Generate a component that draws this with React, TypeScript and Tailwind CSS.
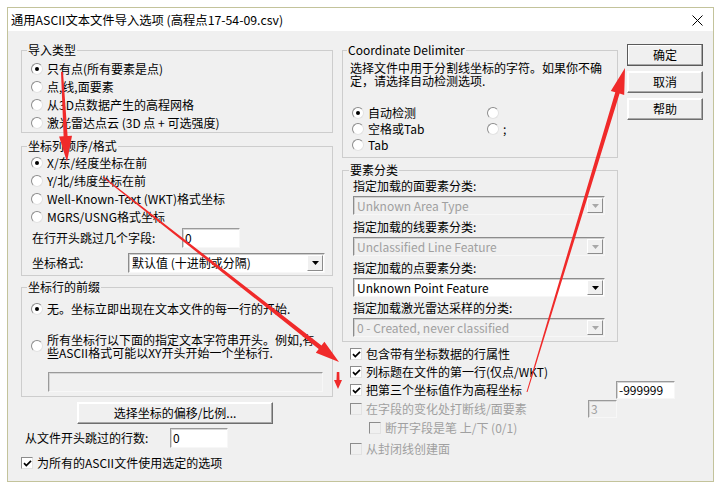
import React from 'react';

// classic win32 controls
const Radio = ({ on }: { on?: boolean }) => (
    <span className="inline-flex w-[12px] h-[12px] shrink-0 rounded-full bg-white border border-t-[#8c8c8c] border-l-[#8c8c8c] border-r-[#e2e2e2] border-b-[#e2e2e2] items-center justify-center">
        {on && <span className="w-[4px] h-[4px] rounded-full bg-black" />}
    </span>
);

const Check = ({ on, disabled }: { on?: boolean; disabled?: boolean }) => (
    <span className={`inline-flex w-[12px] h-[12px] shrink-0 items-center justify-center border border-t-[#8c8c8c] border-l-[#8c8c8c] border-r-[#e2e2e2] border-b-[#e2e2e2] ${disabled ? 'bg-[#f0f0f0]' : 'bg-white'}`}>
        {on && (
            <svg width="9" height="9" viewBox="0 0 9 9">
                <polyline points="1,4.2 3.3,6.6 8,1.8" fill="none" stroke="#000" strokeWidth="1.7" />
            </svg>
        )}
    </span>
);

const TextBox = ({ value, className, disabled }: { value?: string; className: string; disabled?: boolean }) => (
    <div className={`flex items-center pl-[2px] border border-t-[#9a9a9a] border-l-[#9a9a9a] border-r-[#f7f7f7] border-b-[#f7f7f7] shadow-[inset_1px_1px_0_#d6d6d6] ${disabled ? 'bg-[#f0f0f0] text-[#a0a0a0]' : 'bg-white'} ${className}`}>
        {value}
    </div>
);

const Combo = ({ value, className, disabled }: { value: string; className: string; disabled?: boolean }) => (
    <div className={`flex items-stretch border border-t-[#8c8c8c] border-l-[#8c8c8c] border-r-[#f7f7f7] border-b-[#f7f7f7] shadow-[inset_1px_1px_0_#cfcfcf] ${disabled ? 'bg-[#f0f0f0] text-[#a0a0a0]' : 'bg-white'} ${className}`}>
        <div className="flex-1 flex items-center pl-[3px] whitespace-nowrap overflow-hidden">{value}</div>
        <div className="w-[16px] my-[1px] mr-[1px] flex items-center justify-center bg-[#f0f0f0] border border-t-white border-l-white border-r-[#8c8c8c] border-b-[#8c8c8c]">
            <svg width="7" height="4" viewBox="0 0 7 4">
                <polygon points="0,0 7,0 3.5,4" fill={disabled ? '#a8a8a8' : '#000'} />
            </svg>
        </div>
    </div>
);

const Button = ({ label, className, def }: { label: string; className: string; def?: boolean }) => (
    <div className={`flex items-center justify-center bg-[#f0f0f0] border ${def ? 'border-[#5a5a5a]' : 'border-t-white border-l-white border-r-[#6e6e6e] border-b-[#6e6e6e]'} shadow-[inset_-1px_-1px_0_#a8a8a8,inset_1px_1px_0_#ffffff] ${className}`}>
        {label}
    </div>
);

const Group = ({ title, className, legendClass, children }: { title: string; className?: string; legendClass: string; children: React.ReactNode }) => (
    <fieldset className={`border border-[#cdcdcd] ${className ?? ''}`}>
        <legend className={`px-[1px] leading-[14px] ${legendClass}`}>{title}</legend>
        {children}
    </fieldset>
);

const RadioRow = ({ on, label, compact }: { on?: boolean; label: string; compact?: boolean }) => (
    <div className={`flex items-center gap-[4px] ${compact ? 'h-[16px]' : 'h-[18px]'}`}>
        <Radio on={on} />
        <span className="whitespace-nowrap">{label}</span>
    </div>
);

const CheckRow = ({ on, disabled, label, className }: { on?: boolean; disabled?: boolean; label: string; className?: string }) => (
    <div className={`flex items-center gap-[4px] h-[18px] ${disabled ? 'text-[#a0a0a0]' : ''} ${className ?? ''}`}>
        <Check on={on} disabled={disabled} />
        <span className="whitespace-nowrap">{label}</span>
    </div>
);

function arrow(x1: number, y1: number, x2: number, y2: number, tw: number, sw: number, hl: number, hw: number) {
    const dx = x2 - x1, dy = y2 - y1;
    const L = Math.hypot(dx, dy);
    const ux = dx / L, uy = dy / L;
    const nx = -uy, ny = ux;
    const bx = x2 - ux * hl, by = y2 - uy * hl;
    const p = [
        [x1 + nx * tw / 2, y1 + ny * tw / 2],
        [bx + nx * sw / 2, by + ny * sw / 2],
        [bx + nx * hw / 2, by + ny * hw / 2],
        [x2, y2],
        [bx - nx * hw / 2, by - ny * hw / 2],
        [bx - nx * sw / 2, by - ny * sw / 2],
        [x1 - nx * tw / 2, y1 - ny * tw / 2],
    ];
    return p.map(q => q.map(v => v.toFixed(1)).join(',')).join(' ');
}

const Arrows = () => (
    <svg className="absolute top-0 left-0 pointer-events-none" width="720" height="491" viewBox="0 0 720 491">
        <g fill="#f02a2a">
            <polygon points={arrow(62, 72, 67, 162, 2, 4, 26, 13)} />
            <polygon points={arrow(103, 177, 339, 362, 1, 4.5, 24, 14)} />
            <polygon points={arrow(338, 372, 338, 389, 2.5, 3, 9, 8)} />
            <polygon points={arrow(527, 392, 625, 68, 1, 4.5, 26, 14)} />
        </g>
    </svg>
);

export default function App() {
    return (
        <div className="relative w-[720px] h-[491px] bg-white overflow-hidden pl-[7px] pt-[7px] font-['Noto_Sans_CJK_SC',sans-serif] text-[12px] leading-[14px] text-black">
            <div className="w-[707px] h-[475px] border border-[#c3c39b] flex flex-col">
                {/* title bar */}
                <div className="h-[23px] bg-white flex items-center pl-[3px] pr-[10px]">
                    <span className="flex-1 whitespace-nowrap text-[12.3px]">通用ASCII文本文件导入选项 (高程点17-54-09.csv)</span>
                    <svg width="11" height="11" viewBox="0 0 11 11" className="mt-[2px]">
                        <line x1="0.5" y1="0.5" x2="10.5" y2="10.5" stroke="#000" strokeWidth="1" />
                        <line x1="10.5" y1="0.5" x2="0.5" y2="10.5" stroke="#000" strokeWidth="1" />
                    </svg>
                </div>

                <div className="flex-1 bg-[#f0f0f0] flex pl-[13px] pt-[12px]">
                    {/* left column */}
                    <div className="w-[312px] flex flex-col">
                        <Group title="导入类型" legendClass="ml-[5px]">
                            <div className="pt-[3px] pl-[9px]">
                                <RadioRow on label="只有点(所有要素是点)" />
                                <RadioRow label="点,线,面要素" />
                                <RadioRow label="从3D点数据产生的高程网格" />
                                <RadioRow label="激光雷达点云 (3D 点 + 可选强度)" />
                            </div>
                        </Group>

                        <Group title="坐标列顺序/格式" className="mt-[6px]" legendClass="ml-[5px]">
                            <div className="pt-[1px] pl-[9px] pb-[2px]">
                                <RadioRow on label="X/东/经度坐标在前" />
                                <RadioRow label="Y/北/纬度坐标在前" />
                                <RadioRow label="Well-Known-Text (WKT)格式坐标" />
                                <RadioRow label="MGRS/USNG格式坐标" />
                                <div className="flex items-center h-[20px] mt-[2px] pl-[1px]">
                                    <span className="w-[150px]">在行开头跳过几个字段:</span>
                                    <TextBox value="0" className="w-[58px] h-[20px]" />
                                </div>
                                <div className="flex items-center h-[20px] mt-[5px] pl-[1px]">
                                    <span className="w-[96px]">坐标格式:</span>
                                    <Combo value="默认值 (十进制或分隔)" className="w-[197px] h-[20px]" />
                                </div>
                            </div>
                        </Group>

                        <Group title="坐标行的前缀" className="mt-[4px]" legendClass="ml-[5px]">
                            <div className="pt-[6px] pl-[9px] pb-[4px]">
                                <RadioRow on label="无。坐标立即出现在文本文件的每一行的开始." />
                                <div className="flex items-center gap-[4px] mt-[15px]">
                                    <Radio />
                                    <span className="leading-[13px] whitespace-nowrap">
                                        所有坐标行以下面的指定文本字符串开头。例如,有<br />些ASCII格式可能以XY开头开始一个坐标行.
                                    </span>
                                </div>
                                <TextBox disabled className="ml-[17px] mt-[13px] w-[275px] h-[20px]" />
                            </div>
                        </Group>

                        <Button label="选择坐标的偏移/比例..." className="ml-[56px] mt-[5px] w-[196px] h-[22px]" />

                        <div className="flex items-center h-[20px] mt-[4px] pl-[4px]">
                            <span className="w-[145px]">从文件开头跳过的行数:</span>
                            <TextBox value="0" className="w-[58px] h-[20px]" />
                        </div>
                        <CheckRow on label="为所有的ASCII文件使用选定的选项" className="mt-[6px]" />
                    </div>

                    {/* right area */}
                    <div className="ml-[9px] flex flex-col">
                        <div className="flex">
                            <div className="w-[276px] flex flex-col">
                                <Group title="Coordinate Delimiter" legendClass="ml-[4px]">
                                    <div className="pt-[4px] pl-[7px] leading-[13px] whitespace-nowrap">
                                        选择文件中用于分割线坐标的字符。如果你不确<br />定，请选择自动检测选项.
                                    </div>
                                    <div className="mt-[18px] pl-[9px] pb-[4px] flex">
                                        <div className="w-[135px]">
                                            <RadioRow on compact label="自动检测" />
                                            <RadioRow compact label="空格或Tab" />
                                            <RadioRow compact label="Tab" />
                                        </div>
                                        <div>
                                            <RadioRow compact label="" />
                                            <RadioRow compact label=" ;" />
                                        </div>
                                    </div>
                                </Group>

                                <Group title="要素分类" className="mt-[5px]" legendClass="ml-[6px]">
                                    <div className="pl-[10px] pt-[2px] pb-[4px]">
                                        <div className="h-[14px]">指定加载的面要素分类:</div>
                                        <Combo disabled value="Unknown Area Type" className="mt-[3px] w-[252px] h-[19px]" />
                                        <div className="h-[14px] mt-[5px]">指定加载的线要素分类:</div>
                                        <Combo disabled value="Unclassified Line Feature" className="mt-[3px] w-[252px] h-[19px]" />
                                        <div className="h-[14px] mt-[5px]">指定加载的点要素分类:</div>
                                        <Combo value="Unknown Point Feature" className="mt-[3px] w-[252px] h-[19px]" />
                                        <div className="h-[14px] mt-[4px]">指定加载激光雷达采样的分类:</div>
                                        <Combo disabled value="0 - Created, never classified" className="mt-[3px] w-[252px] h-[19px]" />
                                    </div>
                                </Group>
                            </div>

                            <div className="ml-[9px] mt-[1px] w-[76px] flex flex-col gap-[5px]">
                                <Button def label="确定" className="h-[22px]" />
                                <Button label="取消" className="h-[22px]" />
                                <Button label="帮助" className="h-[22px]" />
                            </div>
                        </div>

                        <div className="mt-[3px] flex flex-col">
                            <CheckRow on label="包含带有坐标数据的行属性" className="pl-[8px]" />
                            <CheckRow on label="列标题在文件的第一行(仅点/WKT)" className="pl-[8px]" />
                            <div className="flex items-center h-[18px]">
                                <div className="w-[274px]">
                                    <CheckRow on label="把第三个坐标值作为高程坐标" className="pl-[8px]" />
                                </div>
                                <TextBox value="-999999" className="w-[59px] h-[18px]" />
                            </div>
                            <div className="flex items-center h-[18px] mt-[1px]">
                                <div className="w-[246px]">
                                    <CheckRow disabled label="在字段的变化处打断线/面要素" className="pl-[8px]" />
                                </div>
                                <TextBox disabled value="3" className="w-[29px] h-[18px]" />
                            </div>
                            <CheckRow disabled label="断开字段是笔 上/下 (0/1)" className="pl-[27px] mt-[1px]" />
                            <CheckRow disabled label="从封闭线创建面" className="pl-[8px] mt-[3px]" />
                        </div>
                    </div>
                </div>
            </div>
            <Arrows />
        </div>
    );
}
